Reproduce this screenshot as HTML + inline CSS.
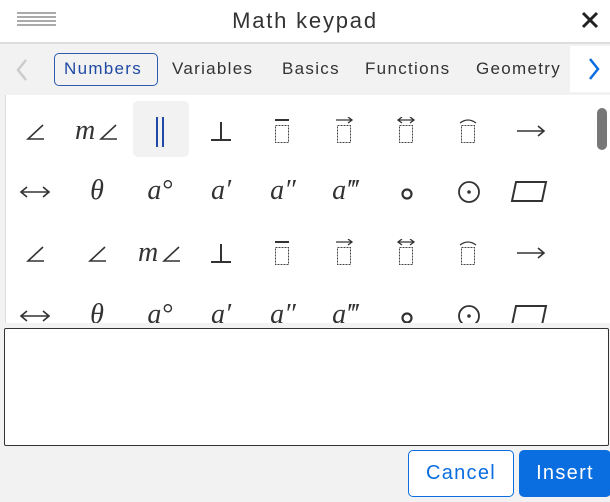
<!DOCTYPE html>
<html><head><meta charset="utf-8">
<style>
*{margin:0;padding:0;box-sizing:border-box}
body{width:610px;height:502px;background:#f2f2f2;position:relative;overflow:hidden;font-family:"Liberation Sans","DejaVu Sans",sans-serif;color:#333}
.abs{position:absolute}
.hdr{left:0;top:0;width:610px;height:44px;background:#fff;border-bottom:2px solid #ddd}
.title{left:0;width:610px;top:8px;text-align:center;font-size:22px;color:#333;letter-spacing:1.8px}
.tab{top:59px;font-size:17px;color:#333;letter-spacing:1.3px}
.c{position:absolute;width:56px;height:56px;text-align:center;line-height:56px;font-family:"Liberation Serif","DejaVu Serif",serif;font-size:28px;color:#333}
.i{font-style:italic}
.c svg{position:absolute}
</style></head><body>
<div class="abs hdr"></div>
<div class="abs" style="left:17px;top:12px;width:39px;height:2px;background:#aaa"></div>
<div class="abs" style="left:17px;top:16px;width:39px;height:2px;background:#aaa"></div>
<div class="abs" style="left:17px;top:20px;width:39px;height:2px;background:#aaa"></div>
<div class="abs" style="left:17px;top:24px;width:39px;height:2px;background:#aaa"></div>
<div class="abs title">Math keypad</div>
<svg class="abs" style="left:581px;top:11px" width="18" height="18"><path d="M2 2L16 16M16 2L2 16" stroke="#222" stroke-width="3"/></svg>

<svg class="abs" style="left:15px;top:58px" width="14" height="24"><path d="M11 2L3 12L11 22" stroke="#ccc" stroke-width="2.5" fill="none"/></svg>
<div class="abs" style="left:54px;top:53px;width:104px;height:33px;border:1.5px solid #2d5bb0;border-radius:5px"></div>
<div class="abs tab" style="left:64px;color:#1f4aa3">Numbers</div>
<div class="abs tab" style="left:172px">Variables</div>
<div class="abs tab" style="left:282px">Basics</div>
<div class="abs tab" style="left:365px">Functions</div>
<div class="abs tab" style="left:476px">Geometry</div>
<div class="abs" style="left:570px;top:46px;width:40px;height:46px;background:#fff"></div>
<svg class="abs" style="left:587px;top:57px" width="14" height="24"><path d="M3 2L11 12L3 22" stroke="#0a6ee0" stroke-width="2.5" fill="none"/></svg>

<div class="abs" style="left:5px;top:95px;width:605px;height:228px;background:#fff;border-left:1px solid #ddd">
<div class="abs" style="left:127px;top:6px;width:56px;height:56px;background:#f2f2f2;border-radius:5px"></div>
<div class="abs" style="left:591px;top:13px;width:10px;height:42px;background:#777;border-radius:5px"></div>
</div>
<div class="abs" style="left:5px;top:95px;width:590px;height:228px;overflow:hidden">
<!-- templates: angle -->
<!-- row1 -->
<div class="c" style="left:2px;top:8px"><svg width="20" height="18" style="left:19px;top:21px"><path d="M17 1L2 15H18" stroke="#333" stroke-width="1.6" fill="none"/></svg></div>
<div class="c" style="left:64px;top:8px"><span class="i" style="position:absolute;left:6px">m</span><svg width="20" height="18" style="left:30px;top:21px"><path d="M17 1L2 15H18" stroke="#333" stroke-width="1.6" fill="none"/></svg></div>
<div class="c" style="left:127px;top:8px"><svg width="20" height="30" style="left:18px;top:14px"><path d="M7 0V30M13 0V30" stroke="#1f4aa3" stroke-width="2"/></svg></div>
<div class="c" style="left:188px;top:8px"><svg width="24" height="20" style="left:16px;top:19px"><path d="M12 0V18M2 18H22" stroke="#333" stroke-width="2"/></svg></div>
<div class="c" style="left:250px;top:8px"><svg width="20" height="30" style="left:18px;top:14px"><path d="M2 3H16" stroke="#333" stroke-width="2"/><rect x="2.5" y="8.5" width="13" height="17" fill="none" stroke="#444" stroke-dasharray="2 1"/></svg></div>
<div class="c" style="left:312px;top:8px"><svg width="20" height="30" style="left:18px;top:14px"><path d="M1 3H17M13 0L17 3L13 6" stroke="#333" fill="none" stroke-width="1.3"/><rect x="2.5" y="8.5" width="13" height="17" fill="none" stroke="#444" stroke-dasharray="2 1"/></svg></div>
<div class="c" style="left:374px;top:8px"><svg width="20" height="30" style="left:18px;top:14px"><path d="M1 3H17M13 0L17 3L13 6M5 0L1 3L5 6" stroke="#333" fill="none" stroke-width="1.3"/><rect x="2.5" y="8.5" width="13" height="17" fill="none" stroke="#444" stroke-dasharray="2 1"/></svg></div>
<div class="c" style="left:436px;top:8px"><svg width="20" height="30" style="left:18px;top:14px"><path d="M1 6Q9 0 17 6" stroke="#333" fill="none" stroke-width="1.2"/><rect x="2.5" y="8.5" width="13" height="17" fill="none" stroke="#444" stroke-dasharray="2 1"/></svg></div>
<div class="c" style="left:497px;top:8px"><svg width="30" height="14" style="left:14px;top:21px"><path d="M1 7H28M22 2L28 7L22 12" stroke="#333" stroke-width="1.6" fill="none"/></svg></div>
<!-- row2 -->
<div class="c" style="left:2px;top:68px"><svg width="30" height="14" style="left:13px;top:22px"><path d="M1 7H29M7 2L1 7L7 12M23 2L29 7L23 12" stroke="#333" stroke-width="1.6" fill="none"/></svg></div>
<div class="c i" style="left:64px;top:68px">θ</div>
<div class="c i" style="left:127px;top:68px">a°</div>
<div class="c i" style="left:188px;top:68px">a′</div>
<div class="c i" style="left:250px;top:68px">a″</div>
<div class="c i" style="left:312px;top:68px">a‴</div>
<div class="c" style="left:374px;top:68px"><svg width="14" height="14" style="left:21px;top:24px"><circle cx="7" cy="7" r="4.5" stroke="#333" stroke-width="2.2" fill="none"/></svg></div>
<div class="c" style="left:436px;top:68px"><svg width="24" height="24" style="left:16px;top:17px"><circle cx="12" cy="12" r="10" stroke="#333" stroke-width="1.8" fill="none"/><circle cx="12" cy="12" r="1.8" fill="#333"/></svg></div>
<div class="c" style="left:497px;top:68px"><svg width="40" height="30" style="left:8px;top:16px"><path d="M6 3H36L32 22H2Z" stroke="#333" fill="none" stroke-width="2"/></svg></div>
<!-- row3 -->
<div class="c" style="left:2px;top:130px"><svg width="20" height="18" style="left:19px;top:21px"><path d="M17 1L2 15H18" stroke="#333" stroke-width="1.6" fill="none"/></svg></div>
<div class="c" style="left:64px;top:130px"><svg width="20" height="18" style="left:19px;top:21px"><path d="M17 1L2 15H18" stroke="#333" stroke-width="1.6" fill="none"/></svg></div>
<div class="c" style="left:127px;top:130px"><span class="i" style="position:absolute;left:6px">m</span><svg width="20" height="18" style="left:30px;top:21px"><path d="M17 1L2 15H18" stroke="#333" stroke-width="1.6" fill="none"/></svg></div>
<div class="c" style="left:188px;top:130px"><svg width="24" height="20" style="left:16px;top:19px"><path d="M12 0V18M2 18H22" stroke="#333" stroke-width="2"/></svg></div>
<div class="c" style="left:250px;top:130px"><svg width="20" height="30" style="left:18px;top:14px"><path d="M2 3H16" stroke="#333" stroke-width="2"/><rect x="2.5" y="8.5" width="13" height="17" fill="none" stroke="#444" stroke-dasharray="2 1"/></svg></div>
<div class="c" style="left:312px;top:130px"><svg width="20" height="30" style="left:18px;top:14px"><path d="M1 3H17M13 0L17 3L13 6" stroke="#333" fill="none" stroke-width="1.3"/><rect x="2.5" y="8.5" width="13" height="17" fill="none" stroke="#444" stroke-dasharray="2 1"/></svg></div>
<div class="c" style="left:374px;top:130px"><svg width="20" height="30" style="left:18px;top:14px"><path d="M1 3H17M13 0L17 3L13 6M5 0L1 3L5 6" stroke="#333" fill="none" stroke-width="1.3"/><rect x="2.5" y="8.5" width="13" height="17" fill="none" stroke="#444" stroke-dasharray="2 1"/></svg></div>
<div class="c" style="left:436px;top:130px"><svg width="20" height="30" style="left:18px;top:14px"><path d="M1 6Q9 0 17 6" stroke="#333" fill="none" stroke-width="1.2"/><rect x="2.5" y="8.5" width="13" height="17" fill="none" stroke="#444" stroke-dasharray="2 1"/></svg></div>
<div class="c" style="left:497px;top:130px"><svg width="30" height="14" style="left:14px;top:21px"><path d="M1 7H28M22 2L28 7L22 12" stroke="#333" stroke-width="1.6" fill="none"/></svg></div>
<!-- row4 -->
<div class="c" style="left:2px;top:192px"><svg width="30" height="14" style="left:13px;top:22px"><path d="M1 7H29M7 2L1 7L7 12M23 2L29 7L23 12" stroke="#333" stroke-width="1.6" fill="none"/></svg></div>
<div class="c i" style="left:64px;top:192px">θ</div>
<div class="c i" style="left:127px;top:192px">a°</div>
<div class="c i" style="left:188px;top:192px">a′</div>
<div class="c i" style="left:250px;top:192px">a″</div>
<div class="c i" style="left:312px;top:192px">a‴</div>
<div class="c" style="left:374px;top:192px"><svg width="14" height="14" style="left:21px;top:24px"><circle cx="7" cy="7" r="4.5" stroke="#333" stroke-width="2.2" fill="none"/></svg></div>
<div class="c" style="left:436px;top:192px"><svg width="24" height="24" style="left:16px;top:17px"><circle cx="12" cy="12" r="10" stroke="#333" stroke-width="1.8" fill="none"/><circle cx="12" cy="12" r="1.8" fill="#333"/></svg></div>
<div class="c" style="left:497px;top:192px"><svg width="40" height="30" style="left:8px;top:16px"><path d="M6 3H36L32 22H2Z" stroke="#333" fill="none" stroke-width="2"/></svg></div>
</div>

<div class="abs" style="left:4px;top:328px;width:605px;height:118px;background:#fff;border:1.5px solid #333;border-radius:2px"></div>
<div class="abs" style="left:408px;top:450px;width:106px;height:47px;background:#fff;border:1.5px solid #0a6ee0;border-radius:5px;color:#0a6ee0;font-size:20px;letter-spacing:1.3px;text-align:center;line-height:44px">Cancel</div>
<div class="abs" style="left:519px;top:450px;width:92px;height:47px;background:#0a6ee0;border-radius:5px;color:#fff;font-size:20px;letter-spacing:1.3px;text-align:center;line-height:46px">Insert</div>
</body></html>
